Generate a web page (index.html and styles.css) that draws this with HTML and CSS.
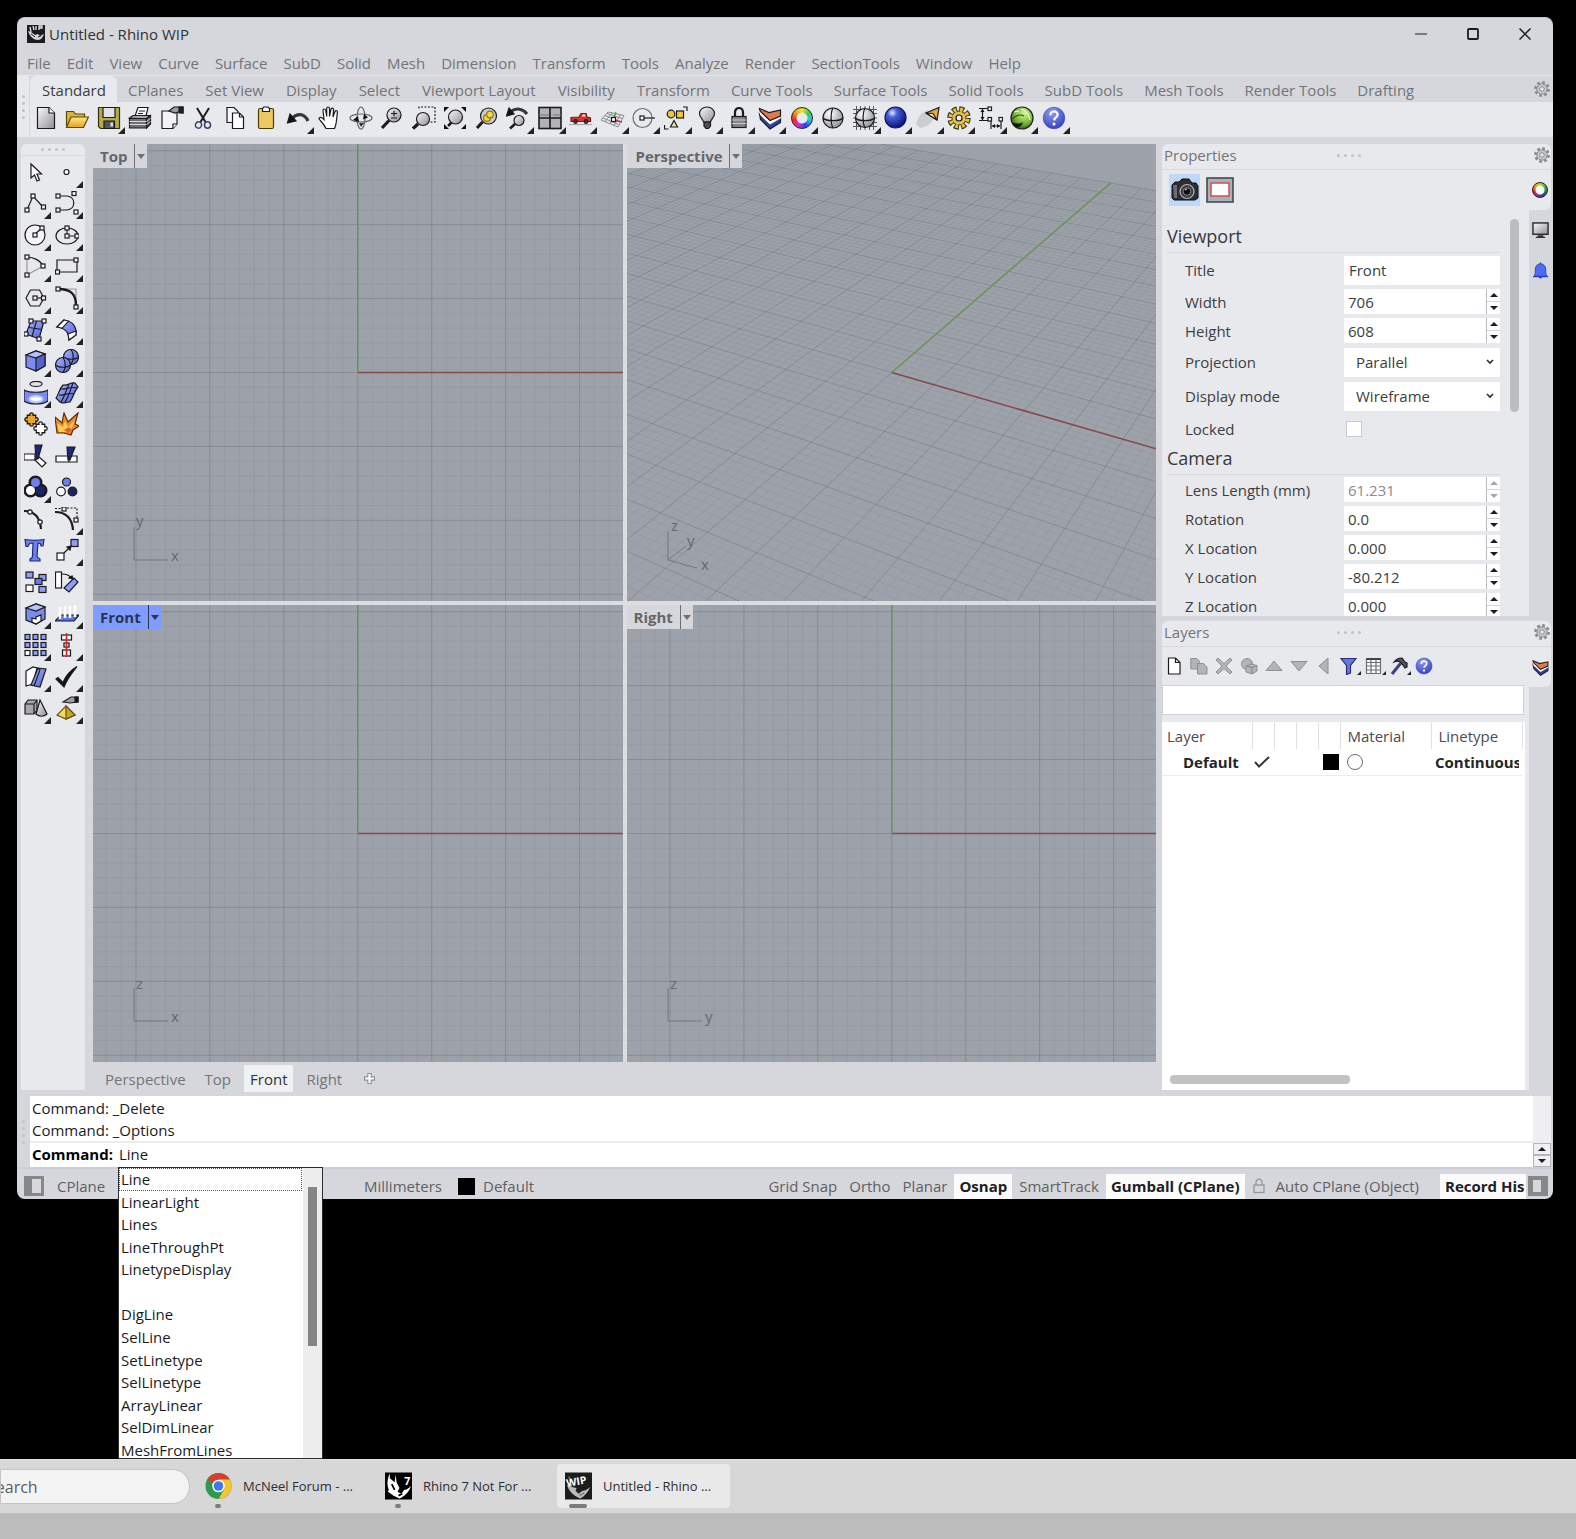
FILE: index.html
```html
<!DOCTYPE html>
<html lang="en">
<head>
<meta charset="utf-8">
<title>Untitled - Rhino WIP</title>
<link rel="stylesheet" href="styles.css">
</head>
<body>
<svg class="defs" aria-hidden="true">
  <defs>
    <linearGradient id="g-blue" x1="0" y1="0" x2="1" y2="1"><stop offset="0" stop-color="#a9b5fa"/><stop offset="1" stop-color="#4f5fd6"/></linearGradient>
    <linearGradient id="g-grey" x1="0" y1="0" x2="1" y2="1"><stop offset="0" stop-color="#fafafa"/><stop offset="1" stop-color="#8f9094"/></linearGradient>
    <linearGradient id="g-gold" x1="0" y1="0" x2="0" y2="1"><stop offset="0" stop-color="#ffe98a"/><stop offset="1" stop-color="#e0a21c"/></linearGradient>
    <radialGradient id="g-navy" cx=".35" cy=".28" r=".75"><stop offset="0" stop-color="#e4ebff"/><stop offset=".3" stop-color="#4560d8"/><stop offset="1" stop-color="#0a1378"/></radialGradient>
    <radialGradient id="g-ball" cx=".35" cy=".3" r=".75"><stop offset="0" stop-color="#fff"/><stop offset="1" stop-color="#8e9095"/></radialGradient>
    <radialGradient id="g-help" cx=".4" cy=".25" r=".8"><stop offset="0" stop-color="#8e9cf5"/><stop offset="1" stop-color="#3140b8"/></radialGradient>
    <radialGradient id="g-green" cx=".6" cy=".3" r=".8"><stop offset="0" stop-color="#d5f59a"/><stop offset=".6" stop-color="#6fb02c"/><stop offset="1" stop-color="#1d3a0c"/></radialGradient>
    <symbol id="gear" viewBox="0 0 16 16"><circle cx="8" cy="8" r="6.600" stroke-width="2.600" stroke-dasharray="2.800 2.380"/><circle cx="8" cy="8" r="5.200" fill="#c6c7cb"/><circle cx="8" cy="8" r="2.300" fill="#e8e9ed"/></symbol>
    <symbol id="help" viewBox="0 0 24 24"><circle cx="12" cy="12" r="10.800" fill="url(#g-help)" stroke="#3a48b4" stroke-width=".6"/><path d="M8.400 9.200c0-5 7.400-4.800 7.200-.4-.1 2.600-3.400 2.600-3.500 5.600" stroke="#fff" stroke-width="2.200"/><circle cx="12" cy="18" r="1.500" fill="#fff" stroke="none"/></symbol>
    <symbol id="layers" viewBox="0 0 24 24"><path d="M1.500 8 12 17.500 22.500 12v4.500L12 23 2.500 13.500Z" fill="#2c429c"/><path d="M1.500 5 12 15 22.500 10v2.500L12 18.500 2 9Z" fill="#fff" stroke="none"/><path d="M1.500 2.500 11 6.500 22.500 4v6L12 14.500 2 5Z" fill="#e6764c"/></symbol>
    <symbol id="puzzle" viewBox="0 0 16 16"><path d="M4 4h2.500C5.500 1 10.500 1 9.500 4H12v2.500c3-1 3 4 0 3V12H9.500c1 3-4 3-3 0H4V9.500c-3 1-3-4 0-3Z"/></symbol>
  </defs>
</svg>

<main class="desktop">
<section class="window" aria-label="Rhino WIP">
  <header class="titlebar">
    <svg class="app-icon" viewBox="0 0 18 18"><rect width="18" height="18" fill="#1c1c1e"/><path d="M1 6c2 6 6 9 10 9 3 0 5-3 6-6l-4 2-2-2-3 1-4-3Z" fill="#d5d6d9"/><path d="M3 2l1 5M6 1l1 4M9 1v4M12 5V1h3v2h-3" stroke="#e6e6e6" stroke-width="1.300" fill="none"/><path d="M4 9l4 3M11 12l3-1" stroke="#222" stroke-width="1" fill="none"/></svg>
    <h1>Untitled - Rhino WIP</h1>
    <div class="window-buttons">
      <button aria-label="Minimize"><svg viewBox="0 0 12 12"><path d="M0 6h12"/></svg></button>
      <button aria-label="Maximize"><svg viewBox="0 0 12 12"><rect x="1" y="1" width="10" height="10" rx="1" stroke-width="1.800"/></svg></button>
      <button aria-label="Close"><svg viewBox="0 0 12 12"><path d="M.5.5l11 11M11.500.5l-11 11" stroke-width="1.500"/></svg></button>
    </div>
  </header>

  <nav class="menubar">
    <button>File</button><button>Edit</button><button>View</button><button>Curve</button><button>Surface</button><button>SubD</button><button>Solid</button><button>Mesh</button><button>Dimension</button><button>Transform</button><button>Tools</button><button>Analyze</button><button>Render</button><button>SectionTools</button><button>Window</button><button>Help</button>
  </nav>

  <div class="ribbon">
    <div class="grip grip-v"><i></i><i></i><i></i><i></i></div>
    <div class="ribbon-main">
      <div class="ribbon-tabs">
        <button class="active">Standard</button><button>CPlanes</button><button>Set View</button><button>Display</button><button>Select</button><button>Viewport Layout</button><button>Visibility</button><button>Transform</button><button class="set">Curve Tools</button><button class="set">Surface Tools</button><button class="set">Solid Tools</button><button class="set">SubD Tools</button><button class="set">Mesh Tools</button><button class="set">Render Tools</button><button class="set">Drafting</button>
        <button class="gear-btn" aria-label="Toolbar options"><svg class="gear"><use href="#gear"/></svg></button>
      </div>
      <div class="toolbar">
        <button aria-label="New"><svg class="ic" viewBox="0 0 24 24"><path d="M3.500 1.500h11.500l5.500 5.500v15.500h-17Z" fill="url(#g-grey)"/><path d="M15 1.500V7h5.500" fill="#fff"/></svg></button>
        <button aria-label="Open"><svg class="ic" viewBox="0 0 24 24"><path d="M1.500 20V5.500h7l2 2.500h9v3" fill="#d8b43a" stroke="#5c4608"/><path d="M1.500 21.500 6 11h17.500l-5 10.500Z" fill="url(#g-gold)" stroke="#5c4608"/></svg></button>
        <button class="fly" aria-label="Save"><svg class="ic" viewBox="0 0 24 24"><path d="M1.500 1.500h21v21H3.500l-2-2Z" fill="#b5aa4c" stroke="#33300f"/><path d="M6 1.500h12v10H6Z" fill="#e2e3e5"/><path d="M7 15h10.500v7.500H7Z" fill="#55575c"/><path d="M13.500 16.500h2.500v4h-2.500Z" fill="#ddd" stroke="none"/></svg></button>
        <button aria-label="Print"><svg class="ic" viewBox="0 0 24 24"><path d="M7 10 10 1.500h10L18 10Z" fill="#fff"/><path d="M11 5h6M10 7.500h5"/><path d="M1.500 12 5 9.500h17L19 13Z" fill="#a9aaad"/><path d="M1.500 12.500h17V22h-17Z" fill="#6f7074"/><path d="M18.500 12.500 22.500 9.500V18l-4 4Z" fill="#55565a"/><path d="M1.500 15.500h17l4-3M1.500 18.500h17l4-3" stroke="#d9dadd" stroke-width="1"/></svg></button>
        <button aria-label="Document properties"><svg class="ic" viewBox="0 0 24 24"><path d="M2 5h15v13l-4 4.500H2Z" fill="#f3f3f5"/><path d="M13 22.500V18h4" fill="#fff"/><path d="M9 5l5-4h9v6l-5-1-3 1Z" fill="#9c9ea3"/><path d="M19 1v6h4V1Z" fill="#222"/></svg></button>
        <button aria-label="Cut"><svg class="ic" viewBox="0 0 24 24"><path d="M6 2l8.500 14M18 2 9.500 16" stroke-width="2"/><ellipse cx="7.500" cy="19" rx="3" ry="3.200" transform="rotate(25 7.500 19)" stroke="#3a4170" stroke-width="1.500"/><ellipse cx="16.500" cy="19" rx="3" ry="3.200" stroke="#3a4170" stroke-width="1.500"/></svg></button>
        <button aria-label="Copy"><svg class="ic" viewBox="0 0 24 24"><path d="M4 1.500h7l4 4v11H4Z" fill="#f5f5f7"/><path d="M9.500 7h7l4 4v11.500h-11Z" fill="#fdfdfd"/><path d="M16.500 7v4h4"/></svg></button>
        <button aria-label="Paste"><svg class="ic" viewBox="0 0 24 24"><rect x="4.500" y="2.500" width="15" height="20" rx="1.500" fill="#ecc863" stroke="#4b3909"/><path d="M8.500 2.500 10 1h4l1.500 1.500v3h-7Z" fill="#fafafa"/></svg></button>
        <button class="fly" aria-label="Undo"><svg class="ic" viewBox="0 0 24 24"><path d="M22 15C19 8.500 13 6 6 12" stroke-width="3.200" stroke="#33363c"/><path d="M1.500 17 4 8l6 7Z" fill="#111"/></svg></button>
        <button aria-label="Pan"><svg class="ic" viewBox="0 0 24 24"><path d="M9 22.500C7 18 4 15.500 2 13c0-2.200 2.500-2.200 5 .5L6 4.500c0-2 2.300-2 2.700 0l1 6V2.500c0-2 2.800-2 2.800 0v8L14 3.200c.5-1.800 2.700-1.400 2.500.5L16 11l2-5.500c.8-1.600 2.700-.8 2.400.8C19.500 12 20 17 17.500 22.500Z" fill="#fff"/></svg></button>
        <button aria-label="Rotate view"><svg class="ic" viewBox="0 0 24 24"><ellipse cx="12" cy="12" rx="11" ry="4" stroke="#66676b"/><ellipse cx="12" cy="12" rx="4" ry="11" stroke="#66676b"/><path d="M9 10l-5 4 6 2ZM15 8l4 3.500-5 2Z" fill="#111" stroke="none"/><path d="M10 17l2 4 3-4Z" fill="#333" stroke="none"/></svg></button>
        <button aria-label="Zoom dynamic"><svg class="ic" viewBox="0 0 24 24"><path d="M2 22 9 14.500" stroke-width="3.200"/><circle cx="14" cy="9" r="7" fill="url(#g-grey)"/><path d="M11 7.500h6M14 4.800v5.400M11 12h6"/></svg></button>
        <button aria-label="Zoom window"><svg class="ic" viewBox="0 0 24 24"><path d="M7 2.500V1h16v15h-5" stroke-dasharray="2 1.500"/><path d="M1 22.500 6 18" stroke-width="3.200"/><circle cx="11" cy="13" r="6.500" fill="url(#g-grey)"/></svg></button>
        <button aria-label="Zoom extents"><svg class="ic" viewBox="0 0 24 24"><path d="M1 1h5L1 6ZM23 1h-5l5 5ZM1 23h5l-5-5ZM23 23h-5l5-5Z" fill="#111" stroke="none"/><path d="M5 20l3.500-3.500" stroke-width="2.500"/><circle cx="12.500" cy="11" r="7" fill="url(#g-grey)"/></svg></button>
        <button aria-label="Zoom selected"><svg class="ic" viewBox="0 0 24 24"><path d="M2 22l5.500-6" stroke-width="3"/><circle cx="13.500" cy="10" r="8" fill="#c9cacd"/><circle cx="12" cy="12" r="3.300" fill="#f5d93b" stroke="#8f7a0d"/><circle cx="15" cy="8.500" r="3.300" fill="#f5d93b" stroke="#8f7a0d"/></svg></button>
        <button class="fly" aria-label="Undo view change"><svg class="ic" viewBox="0 0 24 24"><path d="M21 8C17 2.500 10 1.500 5 5.500" stroke-width="3" stroke="#33363c"/><path d="M.5 10 3 2l5 6Z" fill="#111"/><path d="M4 22.500 9 18" stroke-width="2.600"/><circle cx="13" cy="14.500" r="5" fill="url(#g-grey)"/></svg></button>
        <button class="fly" aria-label="Four viewports"><svg class="ic" viewBox="0 0 24 24"><rect x="1" y="1.500" width="22" height="21" fill="#b2b3b6" stroke-width="1.600"/><path d="M12 1.500v21M1 12h22" stroke-width="1.600"/><path d="M1 9h10M15 9h8" stroke="#777"/></svg></button>
        <button class="fly" aria-label="Named views"><svg class="ic" viewBox="0 0 24 24"><path d="M0 18.500h23" stroke="#aaa"/><path d="M2 15.500v-4l8-.5 2-3.500h5l1 3.500 3.500 1v3.500Z" fill="#d8362b" stroke="#7e1712"/><path d="M13 10.500l.7-2h2.300l.5 2Z" fill="#fff" stroke="none"/><circle cx="6.500" cy="15.500" r="1.800" fill="#444"/><circle cx="17" cy="15.500" r="1.800" fill="#444"/></svg></button>
        <button class="fly" aria-label="Set CPlane"><svg class="ic" viewBox="0 0 24 24"><path d="M0 14 7 6l16 3.500L17 21ZM2 12l15.500 6.500M4 9.500l15 6M6 7.500l15 5M4 15.500 11 7M9 17.500 15 7.500M13 19.500l6.500-11" stroke="#8a8b8f" stroke-width="1"/><path d="M12 14l9 2" stroke="#c33" stroke-width="1.600"/><path d="M12 13l3-7" stroke="#3a3"/><rect x="10.500" y="11.500" width="4" height="4" fill="#fff"/></svg></button>
        <button class="fly" aria-label="Circle"><svg class="ic" viewBox="0 0 24 24"><circle cx="10.500" cy="12" r="9.500" stroke="#6d6e72"/><path d="M12 12h11"/><rect x="8" y="10" width="4" height="4" fill="#fff"/></svg></button>
        <button class="fly" aria-label="Selection"><svg class="ic" viewBox="0 0 24 24"><circle cx="7" cy="8" r="3.800" fill="#f2c63a"/><rect x="12.500" y="5" width="7" height="7" fill="#f2c63a"/><path d="M10 14.500l3.500 6.500h-7Z" fill="#f7dfa0"/><path d="M19 1h4v4M.5 19v4h4"/></svg></button>
        <button class="fly" aria-label="Hide"><svg class="ic" viewBox="0 0 24 24"><path d="M8.500 16C8 13 4.500 11.500 4.500 7.500a7.500 6.500 0 0 1 15 0C19.500 11.500 16 13 15.500 16Z" fill="url(#g-grey)"/><path d="M9 16h6.500v4l-2 2.500h-2.500L9 20Z" fill="#4d4e52"/></svg></button>
        <button class="fly" aria-label="Lock"><svg class="ic" viewBox="0 0 24 24"><path d="M8 11V6.500c0-6 8-6 8 0V11" stroke-width="2.200"/><rect x="5" y="10.500" width="14" height="11" fill="#85868a"/><path d="M5 14h14M5 17.500h14" stroke="#c9cacd"/></svg></button>
        <button class="fly" aria-label="Layers"><svg class="ic" viewBox="0 0 24 24"><use href="#layers"/></svg></button>
        <button class="fly" aria-label="Object properties"><span class="wheel"></span></button>
        <button aria-label="Wireframe"><svg class="ic" viewBox="0 0 24 24"><circle cx="12" cy="12" r="10" fill="url(#g-ball)"/><path d="M2 12c3 3.500 17 3.500 20 0M12 2C9.500 6 9.500 18 12 22"/></svg></button>
        <button class="fly" aria-label="Shaded"><svg class="ic" viewBox="0 0 24 24"><path d="M3.500 0v24M7.500 0v24M12 0v24M16.500 0v24M20.500 0v24M0 3.500h24M0 7.500h24M0 12h24M0 16.500h24M0 20.500h24" stroke="#55565a" stroke-width="1"/><circle cx="12" cy="12" r="9.500" fill="url(#g-ball)"/><path d="M2.500 12c3 3.500 16 3.500 19 0M12 2.500C9.500 6 9.500 18 12 21.500"/></svg></button>
        <button class="fly" aria-label="Render"><svg class="ic" viewBox="0 0 24 24"><circle cx="11.500" cy="11.500" r="10.500" fill="url(#g-navy)" stroke="#0a1360"/></svg></button>
        <button class="fly" aria-label="Lights"><svg class="ic" viewBox="0 0 24 24"><path d="M0 18c2-8 6-12 12-14l6 8c-3 6-8 9-14 10Z" fill="#c4c5c9" stroke="none" opacity=".8"/><path d="M10 7 23 1.500 21 14Z" fill="#e9a93c"/><path d="M10 7l11 7-4-6.500Z" fill="#fff0c0"/></svg></button>
        <button class="fly" aria-label="Options"><svg class="ic" viewBox="0 0 24 24"><circle cx="12" cy="12" r="9" stroke="#3d3008" stroke-width="5.500" stroke-dasharray="4.800 2.270"/><circle cx="12" cy="12" r="7.600" fill="#3d3008" stroke="none"/><circle cx="12" cy="12" r="8.600" stroke="#e3c04d" stroke-width="4" stroke-dasharray="2.800 3.950" stroke-dashoffset="-.9"/><circle cx="12" cy="12" r="6.600" fill="#e3c04d" stroke="none"/><circle cx="12" cy="12" r="3" fill="#f1f1f3"/></svg></button>
        <button class="fly" aria-label="Dimensions"><svg class="ic" viewBox="0 0 24 24"><path d="M0 2.500h9M0 14.500h9M3.500 3v11M12 15v8M22 15v8M13 20h8"/><path d="M3.500 3l-2 3h4ZM3.500 14l-2-3h4ZM13 20l3-2v4ZM21 20l-3-2v4Z" fill="#111" stroke="none"/><rect x="9" y="1" width="3.500" height="3.500" fill="#fff"/><rect x="9" y="11.500" width="3.500" height="3.500" fill="#fff"/><rect x="20" y="11.500" width="3.500" height="3.500" fill="#fff"/></svg></button>
        <button class="fly" aria-label="Grasshopper"><svg class="ic" viewBox="0 0 24 24"><circle cx="12" cy="12" r="11" fill="url(#g-green)" stroke="#222"/><path d="M2 16c3 2 8 2 11 0-1 4-4 6-7 5-2-1-3.500-3-4-5Z" fill="#10160a" stroke="none"/><path d="M4 6l5-1M12 3c4 2 7 6 8 11" stroke="#effcd0"/><path d="M2 13c4-4 9-5 12-3" stroke="#2c4a12"/></svg></button>
        <button class="fly" aria-label="Help"><svg class="ic"><use href="#help"/></svg></button>
      </div>
    </div>
  </div>

  <div class="body">
    <aside class="toolbox" aria-label="Main tools">
      <div class="grip grip-h"><i></i><i></i><i></i><i></i></div>
      <div class="tools">
        <button aria-label="Select"><svg class="ic" viewBox="0 0 24 24"><path d="M7 4v14l3.500-3 2.500 6 2.500-1-2.500-6h4.500Z" fill="#fff"/></svg></button>
        <button class="fly" aria-label="Point"><svg class="ic" viewBox="0 0 24 24"><circle cx="11.500" cy="12" r="2.500" fill="#fff"/></svg></button>
        <button class="fly" aria-label="Polyline"><svg class="ic n" viewBox="0 0 24 24"><path d="M3 19 9 5l10 11"/><rect x="1" y="17" width="4" height="4"/><rect x="7" y="3" width="4" height="4"/><rect x="17.500" y="14" width="4" height="4"/></svg></button>
        <button class="fly" aria-label="Curve"><svg class="ic n" viewBox="0 0 24 24"><path d="M4 5h8c9 1 9 13 0 14H4"/><rect x="1" y="3" width="4" height="4"/><rect x="17" y="0.500" width="4" height="4"/><rect x="1" y="17" width="4" height="4"/><rect x="19" y="19" width="4" height="4"/></svg></button>
        <button class="fly" aria-label="Circle"><svg class="ic n" viewBox="0 0 24 24"><circle cx="11" cy="12" r="10"/><path d="M11 11l7-6"/><rect x="9" y="10" width="4" height="4"/><rect x="16" y="3" width="4" height="4"/></svg></button>
        <button class="fly" aria-label="Ellipse"><svg class="ic n" viewBox="0 0 24 24"><ellipse cx="12" cy="13" rx="11" ry="8"/><path d="M12 5v8h10"/><rect x="10" y="3" width="4" height="4"/><rect x="10" y="11" width="4" height="4"/><rect x="20" y="11" width="4" height="4"/></svg></button>
        <button class="fly" aria-label="Arc"><svg class="ic n" viewBox="0 0 24 24"><path d="M3 20V3" stroke="#999"/><path d="M3 21l16-9" stroke="#999"/><path d="M3 3c7 0 14 4 16 9"/><rect x="1" y="1" width="4" height="4"/><rect x="1" y="19" width="4" height="4"/><rect x="17" y="10" width="4" height="4"/></svg></button>
        <button class="fly" aria-label="Rectangle"><svg class="ic n" viewBox="0 0 24 24"><path d="M2 6h20v12H2Z"/><rect x="0.500" y="16" width="4" height="4"/><rect x="19" y="4" width="4" height="4"/></svg></button>
        <button class="fly" aria-label="Polygon"><svg class="ic n" viewBox="0 0 24 24"><path d="M2 12 6.500 4h9L20 12l-4.500 8h-9Z"/><path d="M11 12h8"/><rect x="9" y="10" width="4" height="4"/><rect x="17.500" y="10" width="4" height="4"/></svg></button>
        <button class="fly" aria-label="Fillet"><svg class="ic n" viewBox="0 0 24 24"><path d="M3 3h18v18" stroke="#999"/><path d="M3 3c13 0 18 5 18 17" stroke-width="2.400"/><rect x="1" y="1" width="4" height="4"/><rect x="19" y="19" width="4" height="4"/></svg></button>
        <button class="fly" aria-label="Surface from points"><svg class="ic n" viewBox="0 0 24 24"><path d="M7 3h13l-5 18L2 16Z" fill="url(#g-blue)"/><path d="M12.500 3 8 18.500M5 9.500l13 2"/><rect x="5" y="1" width="4" height="4"/><rect x="18" y="1" width="4" height="4"/><rect x="0" y="14" width="4" height="4"/><rect x="13" y="19" width="4" height="4"/></svg></button>
        <button class="fly" aria-label="Surface"><svg class="ic" viewBox="0 0 24 24"><path d="M2 9 9 2c7 1 11 5 12 10v5l-7 5c0-7-4-12-12-13Z" fill="url(#g-blue)"/><path d="M2 9 9 2c2 .2 3 .6 4.500 1.300L7 10.300C5 9.500 4 9.200 2 9ZM13 16l8-3v4l-7 5Z" fill="#fff"/></svg></button>
        <button class="fly" aria-label="Box"><svg class="ic" viewBox="0 0 24 24"><path d="M2 6l10-4 9 3v12l-9 5-10-4Z" fill="#7b8bf0"/><path d="M2 6l10-4 9 3-9 4Z" fill="#b6c0fc"/><path d="M12 9l9-4v12l-9 5Z" fill="#5564cc"/></svg></button>
        <button class="fly" aria-label="Solid"><svg class="ic" viewBox="0 0 24 24"><circle cx="16" cy="8" r="7.500" fill="url(#g-blue)"/><path d="M8.500 8c3 3 12 3 15 0M16 .5c3 4 3 11 0 15"/><circle cx="8" cy="16" r="7.500" fill="url(#g-blue)"/><path d="M.5 16c3 3 12 3 15 0M8 8.500c3 4 3 11 0 15"/></svg></button>
        <button class="fly" aria-label="SubD"><svg class="ic" viewBox="0 0 24 24"><ellipse cx="12" cy="3" rx="6" ry="2.500" fill="#e4e4e6"/><path d="M0 9c6 3 18 3 24 0v11c-6 4-18 4-24 0Z" fill="#7b8bf0"/><ellipse cx="12" cy="18" rx="6.500" ry="3" fill="#fff" stroke="#c3ccff" stroke-width="2"/></svg></button>
        <button class="fly" aria-label="Mesh"><svg class="ic" viewBox="0 0 24 24"><path d="M8 4c5 1 7-3 12-2l3 4c-4 4-4 9-8 15-5 0-7 2-10 0l-4-4C4 13 4 8 8 4Z" fill="url(#g-blue)"/><path d="M14 3C11 9 10 15 6 21M18 2c-3 8-4 13-8 19M6 8c5 1 9-3 16-1M4 14c5 1 9-3 15-1"/></svg></button>
        <button aria-label="Plug-ins"><svg class="ic" viewBox="0 0 24 24"><use href="#puzzle" x="8" y="8" width="17" height="17" fill="#fff"/><use href="#puzzle" x="-1" y="-1" width="17" height="17" fill="#eba52c"/></svg></button>
        <button aria-label="Explode"><svg class="ic" viewBox="0 0 24 24"><path d="M2 21 0 5l7 6L9 1l4 9L23 1l-3 11 4 2-6 4-2 5-7-2Z" fill="#ee8a2a" stroke="#5c2c06"/><path d="M4 20l-2-9 6 4 2-6 3 6 7-7-3 8-5 4Z" fill="#ffcb52" stroke="none"/><path d="M9 18l5-3 3 3-4 3Z" fill="#e0632a" stroke="none"/></svg></button>
        <button aria-label="Trim"><svg class="ic" viewBox="0 0 24 24"><path d="M0 10h11v6H0Z" fill="#fff"/><path d="M15 13l7 6-4 4-7-7Z" fill="#fff"/><path d="M11 1h7l-4 14h-2Z" fill="#1e2878"/></svg></button>
        <button aria-label="Split"><svg class="ic" viewBox="0 0 24 24"><path d="M1 12h21v6H1Z" fill="#fff"/><path d="M12 3h8l-5 13h-2Z" fill="#1e2878"/><path d="M14 12v6"/></svg></button>
        <button class="fly" aria-label="Join"><svg class="ic" viewBox="0 0 24 24"><g stroke-width="5"><circle cx="11.500" cy="7.500" r="4.500"/><circle cx="6.500" cy="15.500" r="4.500"/><circle cx="16.500" cy="15.500" r="4.500"/></g><g stroke="none"><circle cx="11.500" cy="7.500" r="4.500" fill="#6f80ee"/><circle cx="6.500" cy="15.500" r="4.500" fill="#fff"/><circle cx="16.500" cy="15.500" r="4.500" fill="#1b2466"/></g></svg></button>
        <button aria-label="Group"><svg class="ic" viewBox="0 0 24 24"><circle cx="11.500" cy="7" r="4" fill="#6f80ee"/><circle cx="6" cy="16.500" r="4.300" fill="#fff"/><circle cx="17.500" cy="16.500" r="4.300" fill="#1b2466"/></svg></button>
        <button aria-label="Edit curve"><svg class="ic n" viewBox="0 0 24 24"><path d="M0 4c10 0 16 6 17 18" stroke-width="2.200"/><circle cx="6" cy="5" r="2.200"/><circle cx="16" cy="15" r="2.200"/></svg></button>
        <button class="fly" aria-label="Points on"><svg class="ic n" viewBox="0 0 24 24"><path d="M0 5c11 0 17 6 18 18" stroke-width="2.200"/><path d="M0 1.500h8M12 1h10v10" stroke-dasharray="2 1.500"/><rect x="7" y="0" width="4" height="4"/><rect x="19" y="11" width="4" height="4"/></svg></button>
        <button aria-label="Text"><svg class="ic" viewBox="0 0 24 24"><path d="M1 1.500c6 1 13 1 19 0l-1 6.500h-2c0-2-1-3-3-3l-1 13c0 2 1 2 3 3v2H6v-2c2-.5 2.500-1 2.500-3L9 5C5 5 5 6 4 8.500H2Z" fill="#6c80ee" stroke="#1d2a80"/></svg></button>
        <button class="fly" aria-label="Move"><svg class="ic" viewBox="0 0 24 24"><rect x="2" y="15" width="7" height="7" fill="#fff"/><rect x="16" y="1.500" width="7" height="7" fill="#8d9cf5"/><path d="M9 15l6-6"/><path d="M16 8l-4 1 3 3Z" fill="#111"/></svg></button>
        <button aria-label="Copy"><svg class="ic" viewBox="0 0 24 24"><rect x="2" y="2" width="7" height="6" fill="#8d9cf5"/><rect x="15" y="4.500" width="7" height="6" fill="#8d9cf5"/><rect x="11" y="8.500" width="7" height="6" fill="#6c7cea"/><rect x="2" y="15" width="7" height="6.500" fill="#fff"/><rect x="15" y="16.500" width="7" height="6" fill="#8d9cf5"/></svg></button>
        <button aria-label="Rotate"><svg class="ic" viewBox="0 0 24 24"><rect x="0.500" y="2" width="6" height="16" fill="#fff"/><path d="M9 18 19 8l4 4-9 10Z" fill="#8d9cf5"/><path d="M7 4c5 0 8 1 10 5"/><path d="M18 9l-4-1 3-2Z" fill="#111"/></svg></button>
        <button class="fly" aria-label="Solid edit"><svg class="ic" viewBox="0 0 24 24"><path d="M2 6l10-4 9 3v12l-9 5-10-4Z" fill="#7b8bf0"/><path d="M2 6l10-4 9 3-9 4Z" fill="#b6c0fc"/><path d="M8 16l4 1v-2l5-2v6l-5 3-4-2Z" fill="#fff"/></svg></button>
        <button class="fly" aria-label="Surface normals"><svg class="ic" viewBox="0 0 24 24"><path d="M6 13h18l-5 6H0Z" fill="#5f72e6"/><path d="M5 17V5M10 16V4M15 16V4M20 15V3" stroke="#fff" stroke-width="2.500"/></svg></button>
        <button class="fly" aria-label="Array"><svg class="ic" viewBox="0 0 24 24"><g fill="#8d9cf5"><rect x="1" y="1.500" width="5" height="5"/><rect x="9" y="1.500" width="5" height="5"/><rect x="17" y="1.500" width="5" height="5"/><rect x="1" y="9.500" width="5" height="5"/><rect x="9" y="9.500" width="5" height="5"/><rect x="17" y="9.500" width="5" height="5"/><rect x="9" y="17.500" width="5" height="5"/><rect x="17" y="17.500" width="5" height="5"/></g><rect x="1" y="17.500" width="5" height="5" fill="#fff"/></svg></button>
        <button class="fly" aria-label="Align"><svg class="ic n" viewBox="0 0 24 24"><rect x="6.500" y="2" width="10" height="5"/><rect x="9" y="10" width="5" height="4"/><rect x="7.500" y="17" width="8" height="6"/><path d="M11.500 0v24" stroke="#d22" stroke-width="1.600"/></svg></button>
        <button class="fly" aria-label="Mirror"><svg class="ic" viewBox="0 0 24 24"><path d="M2 6l7-4 4 1-4 16-7 2Z" fill="#fff"/><path d="M14 3l8 1-6 18-9-2Z" fill="url(#g-blue)"/><path d="M14 3l2 2-6 16" /></svg></button>
        <button class="fly" aria-label="Check"><svg class="ic" viewBox="0 0 24 24"><path d="M1 14l2-1.500 5 5C11 10 16 5 22 1.500 17 8 12 14 9 22Z" fill="#111"/></svg></button>
        <button class="fly" aria-label="Blocks"><svg class="ic" viewBox="0 0 24 24"><path d="M1 8l3-4h9v10l-3 4H1Z" fill="#a7a8ac"/><path d="M1 8h9l3-4M10 8v10"/><path d="M16 4l7 14c-3 3-8 3-11 0Z" fill="url(#g-grey)"/></svg></button>
        <button class="fly" aria-label="Visibility"><svg class="ic" viewBox="0 0 24 24"><path d="M11 10 20 19l-9 4-9-4Z" fill="#f3d864" stroke="#66520c"/><path d="M11 10v13l9-4Z" fill="#c7a22c" stroke="#66520c"/><path d="M8 6l8-5h7v5l-8 1Z" fill="#9c9ea3"/><path d="M20 1v5h3V1Z" fill="#111"/></svg></button>
      </div>
    </aside>

    <section class="work">
      <div class="viewports">
        <div class="viewport">
          <svg class="grid" data-grid="flat" viewBox="-265 -229 530 458" preserveAspectRatio="xMidYMid slice"></svg>
          <svg class="triad" viewBox="0 0 100 80"><path d="M11 26v33h34"/><text x="13" y="25">y</text><text x="48" y="60">x</text></svg>
          <div class="vlabel"><button>Top</button><button class="drop" aria-label="Top menu"></button></div>
        </div>
        <div class="viewport">
          <svg class="grid" data-grid="perspective" viewBox="-265 -229 530 458" preserveAspectRatio="xMidYMid slice"></svg>
          <svg class="triad" viewBox="0 0 100 80"><path d="M11 30v29l18-14M11 59l29 8"/><text x="14" y="30">z</text><text x="30" y="45">y</text><text x="44" y="69">x</text></svg>
          <div class="vlabel wide"><button>Perspective</button><button class="drop" aria-label="Perspective menu"></button></div>
        </div>
        <div class="viewport">
          <svg class="grid" data-grid="flat" viewBox="-265 -229 530 458" preserveAspectRatio="xMidYMid slice"></svg>
          <svg class="triad" viewBox="0 0 100 80"><path d="M11 26v33h34"/><text x="13" y="27">z</text><text x="48" y="60">x</text></svg>
          <div class="vlabel current"><button>Front</button><button class="drop" aria-label="Front menu"></button></div>
        </div>
        <div class="viewport">
          <svg class="grid" data-grid="flat" viewBox="-265 -229 530 458" preserveAspectRatio="xMidYMid slice"></svg>
          <svg class="triad" viewBox="0 0 100 80"><path d="M11 26v33h34"/><text x="13" y="27">z</text><text x="48" y="60">y</text></svg>
          <div class="vlabel"><button>Right</button><button class="drop" aria-label="Right menu"></button></div>
        </div>
      </div>
      <div class="view-tabs">
        <button>Perspective</button><button>Top</button><button class="active">Front</button><button>Right</button>
        <button aria-label="New view"><svg viewBox="0 0 10 10"><path d="M3.500.5h3v3h3v3h-3v3h-3v-3h-3v-3h3Z" fill="#fff" stroke="#8d8e92"/></svg></button>
      </div>
    </section>

    <aside class="side">
      <section class="panel properties">
        <header class="panel-head"><h2>Properties</h2><span class="grip grip-h"><i></i><i></i><i></i><i></i></span><button aria-label="Properties options"><svg class="gear"><use href="#gear"/></svg></button></header>
        <div class="panel-row">
          <div class="panel-content">
            <div class="modes">
              <button class="active" aria-label="Camera"><svg viewBox="0 0 28 22"><path d="M1 6l3-3h4l3-3h7l3 4h4l2 3v12l-3 2H3l-2-2Z" fill="#2d2e31" stroke="#111"/><path d="M2 6h4v13H3Z" fill="#6a6b6f"/><circle cx="16" cy="12.500" r="7" fill="#3c3d42" stroke="#b4b5b9" stroke-width="1.200"/><circle cx="16" cy="12.500" r="3.800" fill="#0d0d10" stroke="#83868c"/><path d="M14 11l2-1" stroke="#fff"/></svg></button>
              <button aria-label="Frame"><svg viewBox="0 0 28 26"><rect x="1" y="1" width="26" height="24" fill="#a3b3bd" stroke="#46474b" stroke-width="1.600"/><rect x="5" y="6" width="18" height="13" fill="#fff" stroke="#dc4a46" stroke-width="1.500"/></svg></button>
            </div>
            <form class="props">
              <div class="fields">
                <h3>Viewport</h3>
                <div class="field"><label for="f-title">Title</label><input id="f-title" type="text" value="Front"></div>
                <div class="field spin"><label for="f-width">Width</label><span class="num"><input id="f-width" type="text" value="706"><span class="steps"><button type="button" class="up" aria-label="Increase width"></button><button type="button" class="down" aria-label="Decrease width"></button></span></span></div>
                <div class="field spin"><label for="f-height">Height</label><span class="num"><input id="f-height" type="text" value="608"><span class="steps"><button type="button" class="up" aria-label="Increase height"></button><button type="button" class="down" aria-label="Decrease height"></button></span></span></div>
                <div class="field"><label for="f-proj">Projection</label><span class="pick"><select id="f-proj"><option>Parallel</option><option>Perspective</option></select><svg viewBox="0 0 8 6"><path d="M1 1l3 3 3-3"/></svg></span></div>
                <div class="field"><label for="f-mode">Display mode</label><span class="pick"><select id="f-mode"><option>Wireframe</option><option>Shaded</option></select><svg viewBox="0 0 8 6"><path d="M1 1l3 3 3-3"/></svg></span></div>
                <div class="field check"><label for="f-lock">Locked</label><input id="f-lock" type="checkbox"></div>
                <h3>Camera</h3>
                <div class="field spin off"><label for="f-lens">Lens Length (mm)</label><span class="num"><input id="f-lens" type="text" value="61.231" disabled><span class="steps"><button type="button" class="up" disabled aria-label="Increase lens length"></button><button type="button" class="down" disabled aria-label="Decrease lens length"></button></span></span></div>
                <div class="field spin"><label for="f-rot">Rotation</label><span class="num"><input id="f-rot" type="text" value="0.0"><span class="steps"><button type="button" class="up" aria-label="Increase rotation"></button><button type="button" class="down" aria-label="Decrease rotation"></button></span></span></div>
                <div class="field spin"><label for="f-x">X Location</label><span class="num"><input id="f-x" type="text" value="0.000"><span class="steps"><button type="button" class="up" aria-label="Increase X"></button><button type="button" class="down" aria-label="Decrease X"></button></span></span></div>
                <div class="field spin"><label for="f-y">Y Location</label><span class="num"><input id="f-y" type="text" value="-80.212"><span class="steps"><button type="button" class="up" aria-label="Increase Y"></button><button type="button" class="down" aria-label="Decrease Y"></button></span></span></div>
                <div class="field spin"><label for="f-z">Z Location</label><span class="num"><input id="f-z" type="text" value="0.000"><span class="steps"><button type="button" class="up" aria-label="Increase Z"></button><button type="button" class="down" aria-label="Decrease Z"></button></span></span></div>
              </div>
              <div class="vscroll"></div>
            </form>
          </div>
          <nav class="rail">
            <button class="active" aria-label="Properties"><span class="wheel small"></span></button>
            <button aria-label="Display"><svg viewBox="0 0 18 18"><rect x="1" y="1" width="16" height="12" fill="url(#g-grey)" stroke="#333" stroke-width="1.600"/><path d="M6 14h6v1.500h2V17H4v-1.500h2Z" fill="#333"/></svg></button>
            <button aria-label="Notifications"><svg viewBox="0 0 18 18"><path d="M2 15c1-1 1.500-2 1.500-7C3.500 4 6 2 9 2s5.500 2 5.500 6c0 5 .5 6 1.500 7Z" fill="#4c6cf5" stroke="#2741b8"/><path d="M1 15.500h16M9 .500V2M7.500 16.500h3" stroke="#2741b8" stroke-width="1.500"/></svg></button>
          </nav>
        </div>
      </section>

      <section class="panel layers">
        <header class="panel-head"><h2>Layers</h2><span class="grip grip-h"><i></i><i></i><i></i><i></i></span><button aria-label="Layers options"><svg class="gear"><use href="#gear"/></svg></button></header>
        <div class="panel-row">
          <div class="panel-content">
            <div class="layer-tools">
              <button aria-label="New layer"><svg class="ic" viewBox="0 0 18 18"><path d="M3.500 1h7l4.500 4.500V17H3.500Z" fill="#fff"/><path d="M10.500 1v4.500H15"/></svg></button>
              <button aria-label="New sublayer" disabled><svg class="ic g" viewBox="0 0 18 18"><path d="M.8 1.500h6l2.500 2.500v8H.8Z"/><path d="M7.500 6.500h6l3.500 3.500v7H7.500Z"/></svg></button>
              <button aria-label="Delete" disabled><svg class="ic g" viewBox="0 0 18 18"><path d="M1 3l2-2 6 5.500L15 1l2 2-6 6 6 6-2 2-6-5.500L3 17l-2-2 6-6Z"/></svg></button>
              <button aria-label="Duplicate" disabled><svg class="ic g" viewBox="0 0 18 18"><circle cx="7" cy="7" r="5.500"/><path d="M6 9l5-2 6 1.500V14l-5 3-6-2Z"/><path d="M6 9l6 1.500 5-2M12 10.500V17" stroke="#888"/></svg></button>
              <button aria-label="Move up" disabled><svg class="ic g" viewBox="0 0 18 18"><path d="M9 4l8 9.500H1Z"/></svg></button>
              <button aria-label="Move down" disabled><svg class="ic g" viewBox="0 0 18 18"><path d="M9 14 1 4.500h16Z"/></svg></button>
              <button aria-label="Move out" disabled><svg class="ic g" viewBox="0 0 18 18"><path d="M4 9l9-8v16Z"/></svg></button>
              <button class="fly" aria-label="Filter"><svg class="ic" viewBox="0 0 18 18"><path d="M1 1.500h15l-5.500 7V16l-4 1.500v-9Z" fill="#6676dd" stroke="#27307e"/></svg></button>
              <button class="fly" aria-label="Columns"><svg class="ic" viewBox="0 0 18 18"><path d="M1.500 1.500h14v15h-14ZM1.500 5.500h14M1.500 9h14M1.500 13h14M6 1.500v15M11 1.500v15" fill="#fdfdfd" stroke="#6d6e72"/><path d="M1.500 2h14" stroke="#444" stroke-width="2"/></svg></button>
              <button class="fly" aria-label="Tools"><svg class="ic" viewBox="0 0 18 18"><path d="M2 17 10.500 6.500" stroke="#39447e" stroke-width="3"/><path d="M4 5c2-3 5-4 8-4l3 4 2 1v4l-2 1-2-3-3-3C8 3.500 6 4 4 5Z" fill="#55565a"/></svg></button>
              <button aria-label="Help"><svg class="ic"><use href="#help"/></svg></button>
            </div>
            <input class="layer-search" type="text" aria-label="Search layers">
            <div class="layer-list">
              <table>
                <colgroup><col class="c-name"><col class="c-flag"><col class="c-flag"><col class="c-flag"><col class="c-flag"><col class="c-mat"><col class="c-mat"></colgroup>
                <thead><tr><th>Layer</th><th></th><th></th><th></th><th></th><th class="pad">Material</th><th class="pad">Linetype</th></tr></thead>
                <tbody><tr><td class="name">Default</td><td><svg class="tick" viewBox="0 0 16 12"><path d="M1 6l4 4.500L15 1"/></svg></td><td></td><td></td><td><span class="swatch"></span></td><td class="mat"><span class="ring"></span></td><td class="lt"><span>Continuous</span></td></tr></tbody>
              </table>
              <div class="hscroll"></div>
            </div>
          </div>
          <nav class="rail"><button class="active" aria-label="Layers"><svg viewBox="0 0 24 24" stroke="#222" stroke-width="1.500" fill="none"><use href="#layers"/></svg></button></nav>
        </div>
      </section>
    </aside>
  </div>

  <section class="command">
    <div class="grip grip-v"><i></i><i></i><i></i><i></i></div>
    <div class="command-main">
      <div class="history"><p>Command: _Delete</p><p>Command: _Options</p></div>
      <div class="prompt">
        <label for="cmd">Command:</label>
        <div class="cmd-box">
          <input id="cmd" type="text" value="Line" autocomplete="off">
          <div class="complete">
            <ul role="listbox" aria-label="Commands">
              <li class="focus">Line</li><li>LinearLight</li><li>Lines</li><li>LineThroughPt</li><li>LinetypeDisplay</li><li></li><li>DigLine</li><li>SelLine</li><li>SetLinetype</li><li>SelLinetype</li><li>ArrayLinear</li><li>SelDimLinear</li><li>MeshFromLines</li>
            </ul>
            <div class="complete-bar"><i></i></div>
          </div>
        </div>
      </div>
    </div>
    <div class="command-scroll"><button class="up" aria-label="Previous"></button><button class="down" aria-label="Next"></button></div>
  </section>

  <footer class="status">
    <button class="dock left" aria-label="Toggle left dock"></button>
    <button class="cplane">CPlane</button>
    <button class="units">Millimeters</button>
    <button class="cur-layer"><span></span>Default</button>
    <div class="snaps">
      <button>Grid Snap</button><button>Ortho</button><button>Planar</button><button class="on">Osnap</button><button>SmartTrack</button><button class="on">Gumball (CPlane)</button>
      <svg class="padlock" viewBox="0 0 12 16"><path d="M3 7V4.500c0-4.500 6-4.500 6 0V7"/><rect x="1" y="7" width="10" height="7.500"/></svg>
      <button>Auto CPlane (Object)</button><button class="on rec">Record His</button>
    </div>
    <button class="dock right" aria-label="Toggle right dock"></button>
  </footer>
</section>
</main>

<nav class="taskbar">
  <label class="search"><input type="text" placeholder="Search" aria-label="Search"></label>
  <button class="task"><svg viewBox="0 0 28 28"><circle cx="14" cy="14" r="13.500" fill="#2f9b4a"/><path d="M14 14 2.300 7.300A13.500 13.500 0 0 1 25.700 7.300H14Z" fill="#d2402f"/><path d="M25.700 7.300A13.500 13.500 0 0 1 14 27.500l6-10.500L14 7.300Z" fill="#f3c52f"/><circle cx="14" cy="14" r="6.500" fill="#fff"/><circle cx="14" cy="14" r="5" fill="#3f78e8"/></svg><span>McNeel Forum - ...</span></button>
  <button class="task"><svg viewBox="0 0 28 28"><rect width="28" height="28" fill="#000"/><path d="M5 1C2 7 2 13 4 18l-1 2 6 4 6 3c5-2 10-7 12-13-3 3-5 4-7 4l-3 4-4-2 2-4-3-6-1-8-1 8-5-4Z" fill="#fff"/><path d="M7 12l3 6M14 24l4-2" stroke="#000" stroke-width="1.800"/><text x="20" y="13" class="logo-text">7</text></svg><span>Rhino 7 Not For ...</span></button>
  <button class="task current"><svg viewBox="0 0 28 28"><rect width="28" height="28" fill="#1c1c1c"/><path d="M2 13c2 6 6 11 14 14 5-3 8-7 10-12-3 3-6 4-8 4l-4 3-3-3 1-3-5-1Z" fill="#b9babd"/><path d="M4 4l3 11M15 24l5-3" stroke="#77787b" stroke-width="1.500"/><text x="2" y="15" class="logo-text" transform="rotate(-10 2 15)">WIP</text></svg><span>Untitled - Rhino ...</span></button>
</nav>
<script src="grid.js"></script>
</body>
</html>
```

FILE: styles.css
```css
* { box-sizing: border-box; }

:root {
  --chrome: #d6d7dc;
  --panel: #e8e9ed;
  --text: #3c3d41;
  --muted: #737478;
}

body {
  margin: 0;
  height: 100vh;
  display: flex;
  flex-direction: column;
  background: #000;
  color: var(--text);
  font: 15px/20px "Open Sans", "Noto Sans", sans-serif;
  overflow: hidden;
}

button, input, select { font: inherit; color: inherit; border: 0; padding: 0; margin: 0; background: none; border-radius: 0; outline: 0; }
button { white-space: nowrap; display: flex; align-items: center; justify-content: center; }
h1, h2, h3, p, ul { margin: 0; padding: 0; font-size: 15px; font-weight: 400; }
.defs { position: absolute; width: 0; height: 0; }

.desktop { flex: 1; min-height: 0; display: flex; padding: 17px 23px 260px 17px; }

.window {
  flex: 1;
  min-width: 0;
  display: flex;
  flex-direction: column;
  background: var(--chrome);
  border-radius: 8px;
  border-top: 1px solid #c3c4c9;
}

/* title bar and menus */
.titlebar { height: 32px; display: flex; align-items: center; gap: 4px; padding: 0 2px 0 10px; flex: none; }
.titlebar h1 { color: #2f3034; }
.app-icon { width: 18px; height: 18px; }
.window-buttons { margin-left: auto; display: flex; }
.window-buttons button { width: 52px; height: 32px; }
.window-buttons svg { width: 12px; height: 12px; fill: none; stroke: #1d1d20; }
.menubar { height: 25px; display: flex; align-items: center; gap: 16px; padding-left: 10px; flex: none; color: var(--muted); }

/* ribbon */
.ribbon { display: flex; flex: none; border-top: 1px solid #e6e7ea; margin-bottom: 7px; }
.ribbon > .grip { background: var(--panel); }
.ribbon-main { flex: 1; min-width: 0; border-left: 1px solid var(--chrome); }
.ribbon-tabs { height: 26px; display: flex; color: var(--muted); }
.ribbon-tabs button { padding: 2px 11px 0; }
.ribbon-tabs .set { padding: 2px 11px 0 10px; }
.ribbon-tabs .active { background: var(--panel); color: var(--text); border-radius: 6px 6px 0 0; padding: 2px 11px 0 12px; }
.ribbon-tabs .gear-btn { margin-left: auto; padding: 0 3px 0 0; }
.gear { width: 16px; height: 16px; fill: none; stroke: #8b8c90; }
.toolbar { height: 35px; background: var(--panel); display: flex; }
.toolbar::after { content: ""; flex: 1; }
.toolbar button { flex: 0 1 calc(1040px / 33); height: 32px; }

.grip { display: flex; justify-content: center; align-items: center; gap: 4px; }
.grip i { width: 3px; height: 3px; border-radius: 50%; background: #c2c3c7; }
.grip-v { flex-direction: column; width: 12px; flex: none; }

.ic { width: 24px; height: 24px; fill: none; stroke: #1b1b1e; stroke-width: 1.2; }
.n rect, .n circle { fill: #f4f4f6; }
.fly { position: relative; }
.fly::after {
  content: "";
  position: absolute;
  right: 0;
  bottom: 0;
  border-left: 7px solid transparent;
  border-bottom: 7px solid #232327;
}
.wheel {
  width: 22px; height: 22px; border-radius: 50%; border: 1px solid #222;
  background: radial-gradient(circle, #e8e9ed 0 5px, transparent 6px), conic-gradient(#f6e32a, #37d23c, #2bc8e8, #2b3fe8, #d42be0, #ef2626, #f79a1f, #f6e32a);
}
.wheel.small { width: 16px; height: 16px; background: radial-gradient(circle, #fff 0 4px, transparent 5px), conic-gradient(#b4e02a, #37c23c, #2b7f48, #2b3fa8, #a42b90, #e32626, #f79a1f, #b4e02a); }

/* body */
.body { flex: 1; min-height: 0; display: flex; }
.toolbox { width: 64px; flex: none; margin: 0 8px 6px 4px; background: var(--panel); border-radius: 6px 6px 0 0; }
.toolbox .grip { height: 12px; border-bottom: 1px solid #d9dade; }
.tools { display: grid; grid-template-columns: 30px 32px; grid-auto-rows: 1fr; height: 568px; }

.work { flex: 1; min-width: 0; display: flex; flex-direction: column; }
.viewports { flex: 1; min-height: 0; display: grid; grid-template: 1fr 1fr / 1fr 1fr; gap: 4px; background: #dcdde1; }
.viewport { position: relative; background: #9da1a9; overflow: hidden; }
.grid { position: absolute; inset: 0; width: 100%; height: 100%; }
.minor { stroke: rgba(80, 88, 104, .09); fill: none; }
.major { stroke: rgba(70, 76, 88, .25); fill: none; }
.x-axis { stroke: #87494d; stroke-width: 1.5; fill: none; }
.y-axis { stroke: #68964f; stroke-width: 1.5; fill: none; }
.triad { position: absolute; left: 30px; bottom: 20px; width: 100px; height: 80px; fill: none; stroke: #74777f; }
.triad text { fill: #64676e; stroke: none; font-size: 15px; }
.vlabel { position: absolute; left: 0; top: 0; height: 24px; display: flex; background: var(--chrome); color: #65666b; font-weight: 700; }
.vlabel button { padding: 0 7px; }
.vlabel.wide button:first-child { padding: 0 6px 0 9px; }
.vlabel .drop { width: 13px; padding: 0; border-left: 1px solid #6e6f74; }
.vlabel .drop::before { content: ""; border: 4px solid transparent; border-bottom: 0; border-top: 5px solid #6e6f74; }
.vlabel.current { background: #7f9dff; color: #2b3350; }
.vlabel.current .drop { border-left-color: #2b3350; }
.vlabel.current .drop::before { border-top-color: #2b3350; }

.view-tabs { height: 34px; display: flex; align-items: flex-start; padding: 3px 0 0 6px; color: var(--muted); }
.view-tabs button { height: 27px; padding: 0 6px; margin-right: 7px; }
.view-tabs .active { background: #f0f1f3; color: #303134; }
.view-tabs svg { width: 11px; height: 11px; }
.view-tabs button:last-child { margin-left: 3px; }

/* right side */
.side { width: 389px; flex: none; margin: 0 2px 6px 6px; display: flex; flex-direction: column; gap: 5px; }
.panel { display: flex; flex-direction: column; background: var(--panel); border-radius: 6px 6px 0 0; }
.panel-head { height: 26px; flex: none; display: grid; grid-template-columns: 1fr auto 1fr 16px; align-items: center; padding: 0 1px 3px 2px; border-bottom: 1px solid #d9dade; }
.panel-head h2 { color: var(--muted); }
.panel-head button { grid-column: 4; }
.panel-row { flex: 1; min-height: 0; display: flex; }
.panel-content { flex: 1; min-width: 0; display: flex; flex-direction: column; }
.rail { width: 22px; flex: none; background: var(--chrome); display: flex; flex-direction: column; }
.rail button { height: 40px; }
.rail svg { width: 17px; height: 17px; }
.rail .active { background: var(--panel); border-radius: 0 0 6px 0; }

.properties { height: 472px; flex: none; }
.modes { display: flex; gap: 4px; padding: 4px 0 0 7px; height: 44px; flex: none; }
.modes button { width: 31px; height: 32px; }
.modes .active { background: #bfd7fb; }
.modes svg { width: 28px; height: 26px; }
.props { flex: 1; min-height: 0; display: flex; gap: 10px; overflow: hidden; padding: 0 10px 0 5px; }
.fields { flex: 1; min-width: 0; display: flex; flex-direction: column; }
.fields h3 { flex: none; height: 31px; line-height: 28px; font-size: 18px; color: #37383b; border-bottom: 1px solid #dadbdf; }
.fields h3:first-child { height: 39px; line-height: 44px; }
.field { flex: none; display: grid; grid-template-columns: 177px 1fr; align-items: center; height: 34px; }
.field label { padding-left: 18px; }
.field.spin { height: 29px; }
.field.check { height: 31px; }
.field > input[type=text], .num, .pick { background: #fff; display: flex; }
.field > input[type=text] { height: 29px; width: 100%; padding-left: 5px; }
.num { height: 25px; min-width: 0; }
.num input { flex: 1; min-width: 0; padding-left: 4px; background: #fff; }
.off input { color: #8a8b8f; -webkit-text-fill-color: #8a8b8f; }
.steps { width: 14px; flex: none; display: flex; flex-direction: column; border-left: 1px solid #b9bbc2; }
.steps button { flex: 1; }
.steps .up { border-bottom: 1px solid #d2d3d8; }
.up::before { content: ""; border: 4px solid transparent; border-top: 0; border-bottom: 4px solid #1d1d20; }
.down::before { content: ""; border: 4px solid transparent; border-bottom: 0; border-top: 4px solid #1d1d20; }
.off .up::before { border-bottom-color: #a5a6aa; }
.off .down::before { border-top-color: #a5a6aa; }
.pick { position: relative; height: 29px; }
.pick select { flex: 1; min-width: 0; appearance: none; padding-left: 12px; }
.pick svg { position: absolute; right: 6px; top: 11px; width: 8px; height: 6px; fill: none; stroke: #2c2d30; stroke-width: 1.600; }
.field input[type=checkbox] { appearance: none; width: 16px; height: 16px; margin-left: 2px; background: #fff; border: 1px solid #c7c8cf; }
.vscroll { width: 9px; height: 193px; margin-top: 5px; border-radius: 5px; background: #bcbdc0; }

.layers { flex: 1; min-height: 0; }
.layer-tools { height: 38px; flex: none; display: flex; gap: 1px; align-items: center; }
.layer-tools button { width: 24px; height: 24px; }
.layer-tools .ic { width: 18px; height: 18px; }
.layer-tools .fly::after { border-left-width: 4px; border-bottom-width: 4px; bottom: 3px; }
.ic.g { fill: #b3b4b7; stroke: #8f9094; stroke-width: 1; }
.layer-search { height: 30px; flex: none; margin-right: 5px; background: #fff; border: 1px solid #cfd0d8; }
.layer-list { flex: 1; min-height: 0; display: flex; flex-direction: column; justify-content: space-between; margin: 7px 4px 0 0; background: #fff; overflow: hidden; }
table { border-collapse: collapse; table-layout: fixed; width: 360px; }
.c-name { width: 90px; }
.c-flag { width: 22px; }
.c-mat { width: 91px; }
th { height: 27px; padding: 0 0 0 5px; text-align: left; font-weight: 400; border-right: 1px solid #dfe0e5; color: #4b4c50; }
th.pad { padding-left: 7px; }
td { height: 26px; padding: 0; border-bottom: 1px solid #ececf0; white-space: nowrap; overflow: hidden; }
.name { padding-left: 21px; font-weight: 700; color: #242527; }
.lt { padding-left: 4px; font-weight: 700; color: #242527; }
.lt span { display: block; width: 84px; overflow: hidden; }
.tick { display: block; width: 16px; height: 12px; margin-left: 2px; fill: none; stroke: #37383b; stroke-width: 2; }
.swatch { display: block; width: 16px; height: 16px; margin-left: 5px; background: #000; }
.mat { padding-left: 7px; }
.ring { display: block; width: 16px; height: 16px; border: 1px solid #6d6e72; border-radius: 50%; }
.hscroll { width: 180px; height: 9px; margin: 0 0 6px 8px; border-radius: 4px; background: #c1c2c4; }

/* command line */
.command { flex: none; display: flex; height: 71px; }
.command > .grip { width: 13px; }
.command-main { flex: 1; min-width: 0; background: #fff; color: #1b1b1d; }
.history { height: 47px; padding: 1px 0 0 2px; border-bottom: 2px solid #ececef; }
.history p { line-height: 22px; }
.prompt { height: 24px; display: flex; align-items: center; gap: 6px; padding: 0 0 2px 2px; }
.prompt label { font-weight: 700; color: #000; }
.cmd-box { position: relative; flex: 1; height: 22px; }
.cmd-box > input { display: block; width: 100%; height: 22px; }
.complete { position: absolute; left: -1px; top: 24px; z-index: 5; width: 205px; height: 292px; display: flex; background: #fff; border: 1px solid #2b2b2e; }
.complete ul { flex: 1; height: 293px; list-style: none; display: flex; flex-direction: column; }
.complete li { flex: 1; display: flex; align-items: center; padding-left: 1px; border: 1px dotted transparent; margin-right: 1px; }
.complete li.focus { border-color: #55565a; }
.complete-bar { width: 19px; background: #ededee; padding: 19px 5px 0 5px; }
.complete-bar i { display: block; width: 9px; height: 159px; background: #858587; }
.command-scroll { width: 20px; flex: none; display: flex; flex-direction: column; justify-content: flex-end; background: #efeff1; border-right: 2px solid var(--chrome); }
.command-scroll button { height: 12px; border: 1px solid #b5b6bb; background: #f1f1f3; }

/* status bar */
.status { flex: none; height: 32px; display: flex; align-items: center; padding: 4px 5px 0 7px; border-top: 2px solid #cccdd6; color: #5f6064; }
.dock { width: 20px; height: 20px; border: 3px solid #86878b; background: #d8d8da; }
.dock.left { border-left-width: 8px; }
.dock.right { border-width: 4px 7px 4px 5px; margin-left: 2px; }
.cplane { margin-left: 13px; width: 50px; justify-content: flex-start; }
.units { margin-left: 257px; }
.cur-layer { margin-left: 16px; gap: 8px; }
.cur-layer span { width: 17px; height: 17px; background: #000; }
.snaps { margin-left: auto; display: flex; align-items: center; gap: 2px; }
.snaps button { padding: 0 5px; height: 25px; }
.snaps .on { background: #fbfbfc; color: #202023; font-weight: 700; }
.padlock { width: 12px; height: 16px; margin: 0 4px 0 6px; fill: none; stroke: #96979b; stroke-width: 1.300; }
.snaps .rec { margin-left: 14px; width: 86px; justify-content: flex-start; overflow: hidden; }

/* taskbar */
.taskbar { flex: none; height: 80px; display: flex; align-items: flex-start; background: #d7d7d7; border-bottom: 26px solid #bcbcbc; border-top: 1px solid #e2e2e2; padding-top: 4px; font-size: 13px; color: #2e2e30; }
.search { width: 190px; height: 35px; margin-top: 5px; background: #f3f3f3; border: 1px solid #c4c4c4; border-radius: 0 18px 18px 0; display: flex; overflow: hidden; }
.search input { flex: 1; min-width: 0; margin-left: -14px; font-size: 16px; }
.search input::placeholder { color: #5c5c5e; opacity: 1; }
.task { position: relative; width: 173px; height: 44px; margin-left: 7px; padding-left: 8px; gap: 11px; justify-content: flex-start; border-radius: 4px; }
.task svg { width: 27px; height: 28px; }
.task::after { content: ""; position: absolute; left: 18px; bottom: 0; width: 6px; height: 4px; border-radius: 2px; background: #7b7b7d; }
.task.current { background: #e9e9ea; }
.task.current::after { left: 12px; width: 18px; }
.logo-text { font: 700 11px/11px "Open Sans", sans-serif; fill: #fff; }
```

FILE: grid.js
```js
// Construction-plane grids. One "major" cell is five snap units.
const SVG = "http://www.w3.org/2000/svg";
const EXTENT = 14;

function addPath(svg, cls, d) {
  const p = document.createElementNS(SVG, "path");
  p.setAttribute("class", cls);
  p.setAttribute("d", d);
  svg.appendChild(p);
}

function flat(x, y) {
  return [x * 74, -y * 74];
}

// Camera turned 30 degrees, tilted 30 degrees, looking at the origin.
function perspective(x, y) {
  const s = 0.5, c = Math.sqrt(3) / 2, focal = 954, distance = 20;
  const ahead = -s * x + c * y;
  const right = c * x + s * y;
  const depth = distance + c * ahead;
  return [focal * right / depth, -focal * s * ahead / depth];
}

function drawGrid(svg, project) {
  const seg = (a, b) => "M" + project(...a).map(v => v.toFixed(1)) + "L" + project(...b).map(v => v.toFixed(1));
  let minor = "", major = "";
  for (let i = -EXTENT * 5; i <= EXTENT * 5; i++) {
    const v = i / 5;
    const d = seg([v, -EXTENT], [v, EXTENT]) + seg([-EXTENT, v], [EXTENT, v]);
    if (i % 5) minor += d; else major += d;
  }
  addPath(svg, "minor", minor);
  addPath(svg, "major", major);
  addPath(svg, "x-axis", seg([0, 0], [EXTENT, 0]));
  addPath(svg, "y-axis", seg([0, 0], [0, EXTENT]));
}

document.querySelectorAll("[data-grid]").forEach(svg =>
  drawGrid(svg, svg.dataset.grid === "flat" ? flat : perspective));
```
